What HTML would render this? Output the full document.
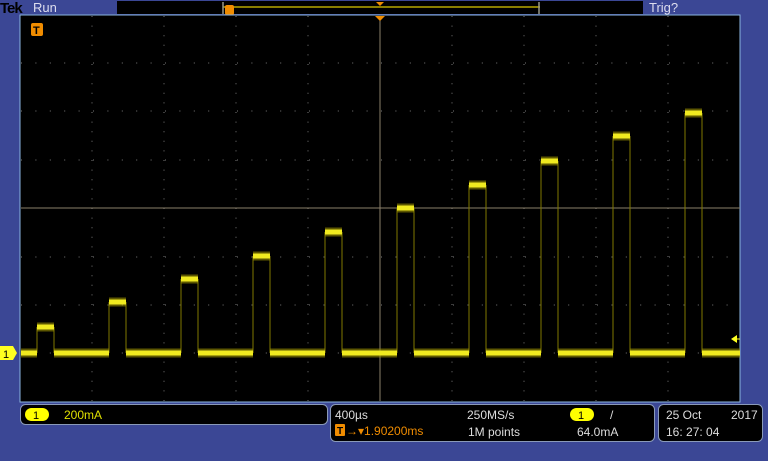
<!DOCTYPE html><html><head><style>
body{margin:0;width:768px;height:461px;background:#3b4795;overflow:hidden;font-family:"Liberation Sans",sans-serif}
</style></head><body>
<svg width="768" height="461" xmlns="http://www.w3.org/2000/svg" style="position:absolute;left:0;top:0">
<rect width="768" height="461" fill="#3b4795"/>
<text x="0" y="13" font-size="15" font-weight="bold" fill="#000" font-family="Liberation Sans" letter-spacing="-1">Tek</text>
<text x="33" y="12" font-size="13" fill="#dde" font-family="Liberation Sans">Run</text>
<text x="649" y="12" font-size="13" fill="#dde" font-family="Liberation Sans">Trig?</text>
<rect x="117" y="1" width="526" height="13" fill="#000"/>
<line x1="223" y1="7" x2="540" y2="7" stroke="#b8a800" stroke-width="1.5"/>
<line x1="223" y1="2" x2="223" y2="14" stroke="#998" stroke-width="1.5"/>
<line x1="539" y1="2" x2="539" y2="14" stroke="#998" stroke-width="1.5"/>
<rect x="225" y="5" width="9" height="10" rx="2" fill="#f08c00"/>
<polygon points="376,2 384,2 380,6" fill="#f08c00"/>
<rect x="20" y="15" width="720" height="387" fill="#000" stroke="#8ab4e0" stroke-width="1"/>
<g stroke="#777" stroke-width="1" stroke-dasharray="1 8.6">
<line x1="92" y1="16" x2="92" y2="401"/><line x1="164" y1="16" x2="164" y2="401"/><line x1="236" y1="16" x2="236" y2="401"/><line x1="308" y1="16" x2="308" y2="401"/><line x1="452" y1="16" x2="452" y2="401"/><line x1="524" y1="16" x2="524" y2="401"/><line x1="596" y1="16" x2="596" y2="401"/><line x1="668" y1="16" x2="668" y2="401"/>
</g>
<g stroke="#777" stroke-width="1" stroke-dasharray="1 13.4">
<line x1="21" y1="63" x2="740" y2="63"/><line x1="21" y1="111" x2="740" y2="111"/><line x1="21" y1="160" x2="740" y2="160"/><line x1="21" y1="257" x2="740" y2="257"/><line x1="21" y1="305" x2="740" y2="305"/><line x1="21" y1="353" x2="740" y2="353"/>
</g>
<line x1="380" y1="16" x2="380" y2="401" stroke="#8a7f6a" stroke-width="1"/>
<line x1="21" y1="208" x2="740" y2="208" stroke="#8a7f6a" stroke-width="1"/>
<polygon points="375,16 385,16 380,21" fill="#f08c00"/>
<rect x="31" y="23" width="12" height="13" rx="2" fill="#f08c00"/>
<text x="33" y="34" font-size="11" font-weight="bold" fill="#000">T</text>
<g fill="none" stroke="#807800" stroke-width="1">
<path d="M37,353 V327 M54,327 V353 M109,353 V302 M126,302 V353 M181,353 V279 M198,279 V353 M253,353 V256 M270,256 V353 M325,353 V232 M342,232 V353 M397,353 V208 M414,208 V353 M469,353 V185 M486,185 V353 M541,353 V161 M558,161 V353 M613,353 V136 M630,136 V353 M685,353 V113 M702,113 V353"/>
</g>
<g fill="none" stroke="#9a9000" stroke-width="9" opacity="0.6">
<path d="M21,353 H37 M37,327 H54 M54,353 H109 M109,302 H126 M126,353 H181 M181,279 H198 M198,353 H253 M253,256 H270 M270,353 H325 M325,232 H342 M342,353 H397 M397,208 H414 M414,353 H469 M469,185 H486 M486,353 H541 M541,161 H558 M558,353 H613 M613,136 H630 M630,353 H685 M685,113 H702 M702,353 H740"/>
</g>
<g fill="none" stroke="#f0ea20" stroke-width="5">
<path d="M21,353 H37 M37,327 H54 M54,353 H109 M109,302 H126 M126,353 H181 M181,279 H198 M198,353 H253 M253,256 H270 M270,353 H325 M325,232 H342 M342,353 H397 M397,208 H414 M414,353 H469 M469,185 H486 M486,353 H541 M541,161 H558 M558,353 H613 M613,136 H630 M630,353 H685 M685,113 H702 M702,353 H740"/>
</g>
<polygon points="0,346 13,346 17,353 13,360 0,360" fill="#ffff20"/>
<text x="3" y="358" font-size="11" fill="#000">1</text>
<polygon points="731,339 737,335 737,343" fill="#ffff20"/><line x1="735" y1="339" x2="740" y2="339" stroke="#ffff20"/>
<rect x="20.5" y="404.5" width="307" height="20" rx="5" fill="#000" stroke="#8a9ab8"/>
<rect x="25" y="408" width="24" height="13" rx="6.5" fill="#ffff00"/>
<text x="33" y="419" font-size="11" fill="#000">1</text>
<text x="64" y="419" font-size="12" fill="#e0e000">200mA</text>
<rect x="330.5" y="404.5" width="324" height="37" rx="5" fill="#000" stroke="#8a9ab8"/>
<text x="335" y="419" font-size="12" fill="#ddd">400µs</text>
<text x="467" y="419" font-size="12" fill="#ddd">250MS/s</text>
<rect x="570" y="408" width="24" height="13" rx="6.5" fill="#ffff00"/>
<text x="578" y="419" font-size="11" fill="#000">1</text>
<text x="610" y="419" font-size="12" fill="#ddd">/</text>
<rect x="335" y="424" width="10" height="12" rx="1" fill="#f08c00"/>
<text x="337" y="434" font-size="10" font-weight="bold" fill="#000">T</text>
<text x="346" y="435" font-size="12" fill="#f08c00">→▾1.90200ms</text>
<text x="468" y="436" font-size="12" fill="#ddd">1M points</text>
<text x="577" y="436" font-size="12" fill="#ddd">64.0mA</text>
<rect x="658.5" y="404.5" width="104" height="37" rx="5" fill="#000" stroke="#8a9ab8"/>
<text x="666" y="419" font-size="12" fill="#ddd">25 Oct</text>
<text x="731" y="419" font-size="12" fill="#ddd">2017</text>
<text x="666" y="436" font-size="12" fill="#ddd">16: 27: 04</text>
</svg>
</body></html>
